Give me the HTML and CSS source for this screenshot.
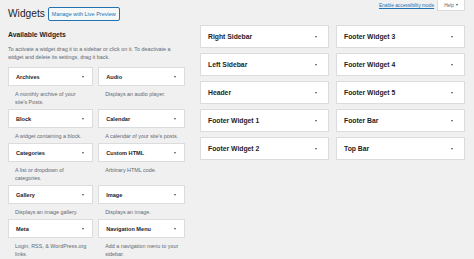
FILE: index.html
```html
<!DOCTYPE html>
<html lang="en">
<head>
  <meta charset="UTF-8">
  <title>Widgets</title>
  <link rel="stylesheet" href="styles.css">
</head>
<body>

  <header class="top">
    <div class="title-row">
      <h1>Widgets</h1>
      <a href="#" class="preview-btn">Manage with Live Preview</a>
    </div>
    <div class="screen-links">
      <a href="#" class="access-link">Enable accessibility mode</a>
      <button class="help-btn">Help <span class="caret"></span></button>
    </div>
  </header>

  <main class="content">

    <section class="available">
      <h2>Available Widgets</h2>
      <p class="intro">To activate a widget drag it to a sidebar or click on it. To deactivate a widget and delete its settings, drag it back.</p>

      <div class="widget-grid">
        <div class="widget">
          <div class="widget-top">Archives <span class="caret"></span></div>
          <p class="widget-desc">A monthly archive of your<br>site's Posts.</p>
        </div>
        <div class="widget">
          <div class="widget-top">Audio <span class="caret"></span></div>
          <p class="widget-desc">Displays an audio player.</p>
        </div>
        <div class="widget">
          <div class="widget-top">Block <span class="caret"></span></div>
          <p class="widget-desc">A widget containing a block.</p>
        </div>
        <div class="widget">
          <div class="widget-top">Calendar <span class="caret"></span></div>
          <p class="widget-desc">A calendar of your site's posts.</p>
        </div>
        <div class="widget">
          <div class="widget-top">Categories <span class="caret"></span></div>
          <p class="widget-desc">A list or dropdown of<br>categories.</p>
        </div>
        <div class="widget">
          <div class="widget-top">Custom HTML <span class="caret"></span></div>
          <p class="widget-desc">Arbitrary HTML code.</p>
        </div>
        <div class="widget">
          <div class="widget-top">Gallery <span class="caret"></span></div>
          <p class="widget-desc">Displays an image gallery.</p>
        </div>
        <div class="widget">
          <div class="widget-top">Image <span class="caret"></span></div>
          <p class="widget-desc">Displays an image.</p>
        </div>
        <div class="widget">
          <div class="widget-top">Meta <span class="caret"></span></div>
          <p class="widget-desc">Login, RSS, &amp; WordPress.org<br>links.</p>
        </div>
        <div class="widget">
          <div class="widget-top">Navigation Menu <span class="caret"></span></div>
          <p class="widget-desc">Add a navigation menu to your<br>sidebar.</p>
        </div>
      </div>
    </section>

    <section class="sidebars">
      <div class="sidebar-col">
        <div class="sidebar">Right Sidebar <span class="caret"></span></div>
        <div class="sidebar">Left Sidebar <span class="caret"></span></div>
        <div class="sidebar">Header <span class="caret"></span></div>
        <div class="sidebar">Footer Widget 1 <span class="caret"></span></div>
        <div class="sidebar">Footer Widget 2 <span class="caret"></span></div>
      </div>
      <div class="sidebar-col">
        <div class="sidebar">Footer Widget 3 <span class="caret"></span></div>
        <div class="sidebar">Footer Widget 4 <span class="caret"></span></div>
        <div class="sidebar">Footer Widget 5 <span class="caret"></span></div>
        <div class="sidebar">Footer Bar <span class="caret"></span></div>
        <div class="sidebar">Top Bar <span class="caret"></span></div>
      </div>
    </section>

  </main>

</body>
</html>
```

FILE: styles.css
```css
body {
  margin: 0;
  background-color: #f0f0f1;
  color: #1d2327;
  font-family: 'Liberation Sans', Arial, sans-serif;
  height: 259px;
  overflow: hidden;
}

.top {
  display: flex;
  justify-content: space-between;
  align-items: flex-start;
  padding: 0 9px 0 8px;
  height: 25px;
}

.title-row {
  display: flex;
  align-items: center;
  gap: 3px;
  padding-top: 7px;
}

h1 {
  margin: 0;
  font-size: 10.2px;
  font-weight: 400;
  line-height: 14px;
}

.preview-btn {
  display: flex;
  align-items: center;
  height: 12px;
  padding: 0 3px;
  border: 1px solid #2271b1;
  border-radius: 2px;
  background-color: #f6f7f7;
  color: #2271b1;
  font-size: 5.5px;
  text-decoration: none;
}

.screen-links {
  display: flex;
  align-items: center;
  gap: 3px;
}

.access-link {
  color: #2271b1;
  font-size: 4.8px;
}

.help-btn {
  display: flex;
  align-items: center;
  gap: 2px;
  height: 11px;
  padding: 0 6px;
  background-color: #fff;
  border: 1px solid #dcdcde;
  border-top: none;
  color: #646970;
  font-family: inherit;
  font-size: 4.8px;
}

.caret {
  display: inline-block;
  width: 0;
  height: 0;
  border-left: 1.5px solid transparent;
  border-right: 1.5px solid transparent;
  border-top: 2px solid #50575e;
}

.content {
  display: flex;
  gap: 19px;
  padding: 0 9px 0 8px;
}

/* Columna de widgets disponibles */
.available {
  width: 173px;
}

h2 {
  margin: 5px 0 0;
  font-size: 6.8px;
  font-weight: 700;
  line-height: 10px;
}

.intro {
  margin: 5px 0 0;
  color: #646970;
  font-size: 5.4px;
  line-height: 8px;
}

.widget-grid {
  display: grid;
  grid-template-columns: 1fr 1fr;
  column-gap: 5px;
  margin-top: 6px;
}

.widget-top {
  display: flex;
  justify-content: space-between;
  align-items: center;
  height: 17px;
  padding: 0 8px 0 7px;
  background-color: #fff;
  border: 1px solid #dcdcde;
  font-size: 5.6px;
  font-weight: 700;
}

.widget-desc {
  margin: 0;
  padding: 4px 7px 3px;
  color: #646970;
  font-size: 5.4px;
  line-height: 8px;
  white-space: nowrap;
}

/* Zonas de widgets */
.sidebars {
  flex: 1;
  display: flex;
  gap: 7px;
}

.sidebar-col {
  flex: 1;
  display: flex;
  flex-direction: column;
  gap: 5px;
}

.sidebar {
  display: flex;
  justify-content: space-between;
  align-items: center;
  height: 21px;
  padding: 0 11px 0 7px;
  background-color: #fff;
  border: 1px solid #dcdcde;
  font-size: 6.8px;
  font-weight: 700;
}
```
